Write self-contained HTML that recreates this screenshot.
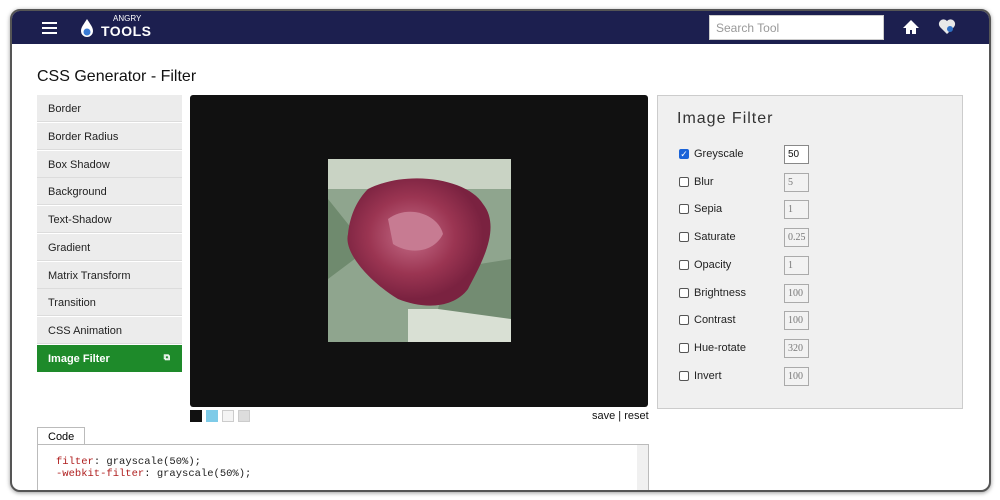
<!DOCTYPE html>
<html><head><style>
*{box-sizing:border-box;margin:0;padding:0}
body{width:1000px;height:500px;background:#fff;font-family:"Liberation Sans",sans-serif;position:relative;overflow:hidden}
.frame{position:absolute;left:10px;top:9px;width:981px;height:483px;border:2px solid #555;border-radius:10px;overflow:hidden;background:#fff;box-shadow:0 1px 4px rgba(0,0,0,.4)}
.hdr{position:absolute;left:0;top:0;width:100%;height:33px;background:#1c1f4f}
.abs{position:absolute}
.menu{position:absolute;left:25px;width:145px;height:27px;background:#ececec;border-bottom:1px solid #dcdcdc;font-size:11px;color:#222;padding:8px 0 0 11px}
.row{position:absolute;left:667px;font-size:11px;color:#222}
.cb{position:absolute;left:0;top:1px;width:10px;height:10px;border:1px solid #555;border-radius:2px;background:#fff}
.inp{position:absolute;left:105px;top:-3px;width:25px;height:19px;border:1px solid #aaa;background:#f2f2f2;font-family:"Liberation Serif",serif;font-size:10px;color:#777;padding:3px 0 0 3px}
</style></head><body>
<div class="frame">
<div class="hdr">
 <div class="abs" style="left:30px;top:11px;width:15px;height:2px;background:#fff;box-shadow:0 5px 0 #fff,0 10px 0 #fff"></div>
 <svg class="abs" style="left:67px;top:7px" width="16" height="20"><path d="M8 1 C5 6 2 9 2 13 a6 6 0 0 0 12 0 C14 9 11 6 8 1Z" fill="#fff"/><circle cx="8" cy="14" r="3.5" fill="#3a7bd5"/></svg>
 <div class="abs" style="left:101px;top:3px;color:#fff;font-size:8px">ANGRY</div>
 <div class="abs" style="left:89px;top:12px;color:#fff;font-size:14px;font-weight:bold;letter-spacing:.5px">TOOLS</div>
 <div class="abs" style="left:697px;top:4px;width:175px;height:25px;background:#fff;border:1px solid #ccc;font-size:12px;color:#999;padding:5px 6px">Search Tool</div>
 <svg class="abs" style="left:890px;top:8px" width="18" height="16"><path d="M9 1 L1 9 H4 V15 H8 V11 H10 V15 H14 V9 H17Z" fill="#fff"/></svg>
 <svg class="abs" style="left:926px;top:7px" width="18" height="17"><path d="M9 16 L2 9 A4 4 0 0 1 9 3 A4 4 0 0 1 16 9Z" fill="#e8e8e8"/><circle cx="12" cy="11" r="3" fill="#2f6fc4"/></svg>
</div>
<div class="abs" style="left:25px;top:57px;font-size:16px;color:#111">CSS Generator - Filter</div>
<div class="menu" style="top:84px">Border</div>
<div class="menu" style="top:112px">Border Radius</div>
<div class="menu" style="top:140px">Box Shadow</div>
<div class="menu" style="top:167px">Background</div>
<div class="menu" style="top:195px">Text-Shadow</div>
<div class="menu" style="top:223px">Gradient</div>
<div class="menu" style="top:251px">Matrix Transform</div>
<div class="menu" style="top:278px">Transition</div>
<div class="menu" style="top:306px">CSS Animation</div>
<div class="menu" style="top:334px;background:#1e8a2a;color:#fff;font-weight:bold;border:none">Image Filter<span style="position:absolute;right:12px;top:7px;font-size:9px">&#x29C9;</span></div>
<div class="abs" style="left:178px;top:84px;width:458px;height:312px;background:#111;border-radius:3px">
 <svg class="abs" style="left:138px;top:64px" width="183" height="183">
  <defs><radialGradient id="r" cx=".45" cy=".45" r=".5"><stop offset="0" stop-color="#c56d88"/><stop offset=".6" stop-color="#9b3552"/><stop offset="1" stop-color="#7a2240"/></radialGradient></defs>
  <rect width="183" height="183" fill="#8fa58e"/>
  <rect x="0" y="0" width="183" height="30" fill="#c9d3c4"/>
  <rect x="80" y="150" width="103" height="33" fill="#d9e0d4"/>
  <path d="M0 40 L40 90 L0 120Z" fill="#6f8a6e"/>
  <path d="M120 110 L183 100 L183 160 L110 150Z" fill="#738c72"/>
  <path d="M40 30 C80 10 140 20 155 45 C175 70 150 110 140 130 C125 150 95 150 70 140 C45 125 15 95 20 75 C22 55 30 40 40 30Z" fill="url(#r)"/>
  <path d="M60 60 C80 45 110 55 115 75 C105 95 80 95 65 85Z" fill="#c77b92"/>
 </svg>
</div>
<div class="abs" style="left:178px;top:399px;width:12px;height:12px;background:#111"></div>
<div class="abs" style="left:194px;top:399px;width:12px;height:12px;background:#7ecbe8"></div>
<div class="abs" style="left:210px;top:399px;width:12px;height:12px;background:#f4f4f4;border:1px solid #ccc"></div>
<div class="abs" style="left:226px;top:399px;width:12px;height:12px;background:#ddd;border:1px solid #ccc"></div>
<div class="abs" style="left:580px;top:399px;font-size:11px;color:#111">save | reset</div>
<div class="abs" style="left:645px;top:84px;width:306px;height:314px;background:#f0f0f0;border:1px solid #ccc"></div>
<div class="abs" style="left:665px;top:99px;font-size:16px;color:#333;letter-spacing:1px">Image Filter</div>
<div class="row" style="top:137px"><span class="cb" style="background:#1a63d8;border-color:#1a63d8;color:#fff;font-size:9px;line-height:8px;text-align:center">✓</span><span style="margin-left:15px">Greyscale</span><span class="inp" style="background:#fff;color:#111;font-family:'Liberation Sans';border-color:#888">50</span></div>
<div class="row" style="top:165px"><span class="cb"></span><span style="margin-left:15px">Blur</span><span class="inp">5</span></div>
<div class="row" style="top:192px"><span class="cb"></span><span style="margin-left:15px">Sepia</span><span class="inp">1</span></div>
<div class="row" style="top:220px"><span class="cb"></span><span style="margin-left:15px">Saturate</span><span class="inp">0.25</span></div>
<div class="row" style="top:248px"><span class="cb"></span><span style="margin-left:15px">Opacity</span><span class="inp">1</span></div>
<div class="row" style="top:276px"><span class="cb"></span><span style="margin-left:15px">Brightness</span><span class="inp">100</span></div>
<div class="row" style="top:303px"><span class="cb"></span><span style="margin-left:15px">Contrast</span><span class="inp">100</span></div>
<div class="row" style="top:331px"><span class="cb"></span><span style="margin-left:15px">Hue-rotate</span><span class="inp">320</span></div>
<div class="row" style="top:359px"><span class="cb"></span><span style="margin-left:15px">Invert</span><span class="inp">100</span></div>
<div class="abs" style="left:25px;top:416px;width:48px;height:18px;border:1px solid #bbb;border-bottom:none;background:#fff;font-size:11px;padding:3px 0 0 10px">Code</div>
<div class="abs" style="left:25px;top:433px;width:612px;height:60px;border:1px solid #bbb;background:#fff;font-family:'Liberation Mono',monospace;font-size:10.5px;padding:11px 0 0 18px;line-height:12px;color:#222"><span style="color:#b02020">filter</span>: grayscale(50%);<br><span style="color:#b02020">-webkit-filter</span>: grayscale(50%);
 <div class="abs" style="right:0;top:0;width:11px;height:60px;background:#f0f0f0"></div></div>
</div>
</body></html>
